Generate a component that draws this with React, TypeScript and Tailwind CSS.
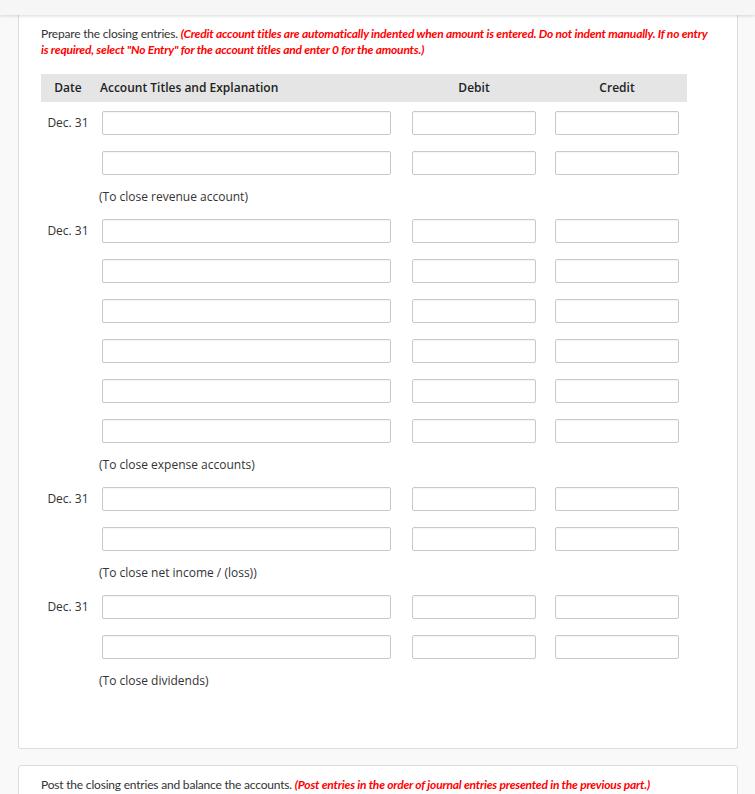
const bodyFont = { fontFamily: 'Tahoma, "Open Sans", sans-serif' }

type Entry = { lines: number; note: string }

const entries: Entry[] = [
  { lines: 2, note: '(To close revenue account)' },
  { lines: 6, note: '(To close expense accounts)' },
  { lines: 2, note: '(To close net income / (loss))' },
  { lines: 2, note: '(To close dividends)' },
]

function Field({ className }: { className: string }) {
  return (
    <input
      type="text"
      className={`h-[24px] border border-[#c9c9c9] rounded-[2px] bg-white outline-none shadow-[inset_0_1px_1px_rgba(0,0,0,0.04)] ${className}`}
    />
  )
}

function JournalRow({ date }: { date?: string }) {
  return (
    <div className="flex items-center h-[40px]">
      <div className="w-[54px] text-center text-[12px] text-[#333]">{date}</div>
      <div className="w-[302px] pl-[7px]">
        <Field className="w-[289px]" />
      </div>
      <div className="pl-[15px]">
        <Field className="w-[124px]" />
      </div>
      <div className="pl-[19px]">
        <Field className="w-[124px]" />
      </div>
    </div>
  )
}

export default function App() {
  return (
    <div className="min-h-[794px] bg-[#f9f9f9] font-['Lato',sans-serif]">
      <div className="h-[15px] bg-[#f6f6f6] shadow-[0_1px_3px_rgba(0,0,0,0.15)] relative" />
      <div className="ml-[18px] w-[720px] bg-white border-x border-b border-[#dcdcdc] rounded-b-[3px] pl-[22px] pt-[11px] pb-[53px]">
        <p className="text-[12px] leading-[16px] text-[#333] tracking-[-0.2px] pr-[20px]">
          Prepare the closing entries.{' '}
          <span className="text-[#ff0000] font-bold italic">
            (Credit account titles are automatically indented when amount is entered. Do not indent manually. If no entry is required, select "No Entry" for the account titles and enter 0 for the amounts.)
          </span>
        </p>

        <div className="mt-[16px] w-[646px]" style={bodyFont}>
          <div className="flex items-center h-[28px] bg-[#e5e5e5] text-[12px] font-semibold text-[#222]">
            <div className="w-[54px] text-center">Date</div>
            <div className="w-[302px] pl-[5px]">Account Titles and Explanation</div>
            <div className="w-[139px] pl-[15px] text-center">Debit</div>
            <div className="w-[124px] ml-[19px] text-center">Credit</div>
          </div>

          {entries.map((entry, i) => (
            <div key={i} className={i === 0 ? 'pt-[1px]' : ''}>
              {Array.from({ length: entry.lines }).map((_, j) => (
                <JournalRow key={j} date={j === 0 ? 'Dec. 31' : undefined} />
              ))}
              <div className="h-[28px] flex items-center pl-[58px] text-[12px] text-[#333]">
                {entry.note}
              </div>
            </div>
          ))}
        </div>
      </div>

      <div className="ml-[18px] mt-[16px] w-[720px] bg-white border border-[#dcdcdc] rounded-[3px] pl-[22px] pt-[11px] pb-[20px]">
        <p className="text-[12px] leading-[16px] text-[#333] tracking-[-0.2px]">
          Post the closing entries and balance the accounts.{' '}
          <span className="text-[#ff0000] font-bold italic">
            (Post entries in the order of journal entries presented in the previous part.)
          </span>
        </p>
      </div>
    </div>
  )
}
